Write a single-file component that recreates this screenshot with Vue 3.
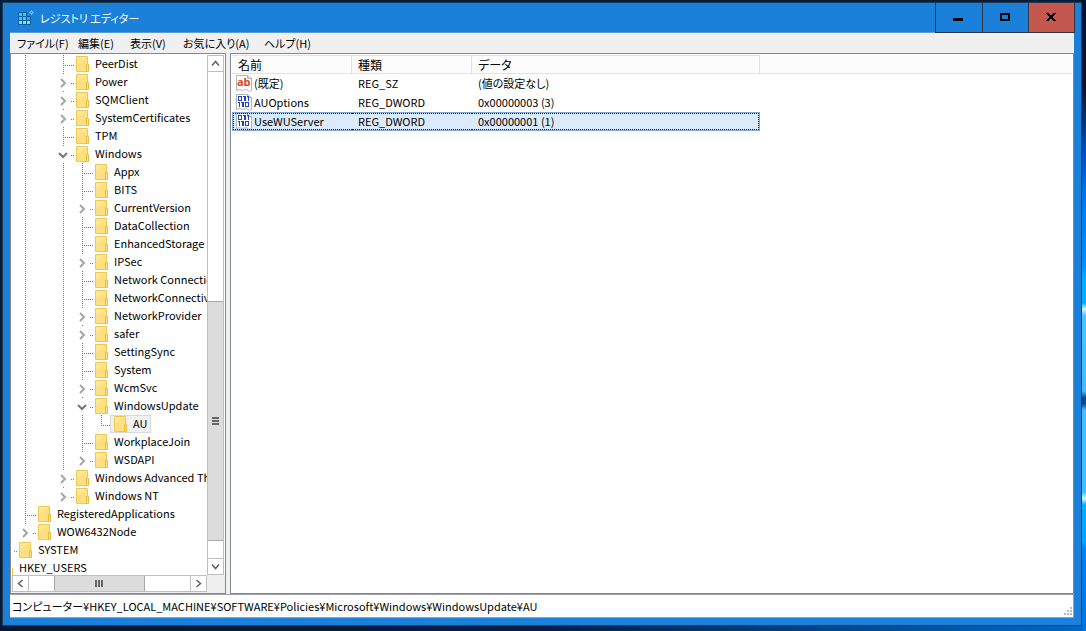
<script setup>
import { ref } from 'vue'

const menus = ['ファイル(F)', '編集(E)', '表示(V)', 'お気に入り(A)', 'ヘルプ(H)']

// guides: one character per indent cell left of the folder
//  ' ' empty, '|' line, '+' leaf branch, 'L' last branch, '>' closed, 'v' open
const nodes = ref([
  { name: 'PeerDist', guides: ' | +' },
  { name: 'Power', guides: ' | >' },
  { name: 'SQMClient', guides: ' | >' },
  { name: 'SystemCertificates', guides: ' | >' },
  { name: 'TPM', guides: ' | +' },
  { name: 'Windows', guides: ' | v' },
  { name: 'Appx', guides: ' | |+' },
  { name: 'BITS', guides: ' | |+' },
  { name: 'CurrentVersion', guides: ' | |>' },
  { name: 'DataCollection', guides: ' | |+' },
  { name: 'EnhancedStorage', guides: ' | |+' },
  { name: 'IPSec', guides: ' | |>' },
  { name: 'Network Connections', guides: ' | |+' },
  { name: 'NetworkConnectivityStatusIndicator', guides: ' | |+' },
  { name: 'NetworkProvider', guides: ' | |>' },
  { name: 'safer', guides: ' | |>' },
  { name: 'SettingSync', guides: ' | |+' },
  { name: 'System', guides: ' | |+' },
  { name: 'WcmSvc', guides: ' | |>' },
  { name: 'WindowsUpdate', guides: ' | |v' },
  { name: 'AU', guides: ' | ||L' },
  { name: 'WorkplaceJoin', guides: ' | |+' },
  { name: 'WSDAPI', guides: ' | |>' },
  { name: 'Windows Advanced Threat Protection', guides: ' | >' },
  { name: 'Windows NT', guides: ' | >' },
  { name: 'RegisteredApplications', guides: ' +' },
  { name: 'WOW6432Node', guides: ' >' },
  { name: 'SYSTEM', guides: '>' },
  { name: 'HKEY_USERS', guides: '' }
])
const selectedNode = ref('AU')

const values = ref([
  { name: '(既定)', type: 'REG_SZ', data: '(値の設定なし)' },
  { name: 'AUOptions', type: 'REG_DWORD', data: '0x00000003 (3)' },
  { name: 'UseWUServer', type: 'REG_DWORD', data: '0x00000001 (1)' }
])
const selectedValue = ref('UseWUServer')
</script>

<template>
  <div class="desktop">
    <main class="window">
      <header class="titlebar">
        <svg class="app-icon" width="16" height="16" viewBox="0 0 16 16" shape-rendering="crispEdges">
          <path fill="#0d5fa5" d="M0 2h13v13H0z" />
          <path fill="#35c8f0" d="M1 3h3v3H1zM5 3h3v3H5zM1 7h3v3H1zM5 7h3v3H5z" />
          <path fill="#7fe4fb" d="M1 11h3v3H1zM5 11h3v3H5zM9 11h3v3H9z" />
          <path fill="#22a9dc" d="M9 7h3v3H9z" />
          <path fill="#1a80d9" d="M9 0h7v6H9z" />
          <path fill="#4fc8ee" d="M13 0h1v1h1v1h1v1h-1v1h-1v1h-1V4h-1V3h-1V2h1V1h1z" />
          <path fill="#1a80d9" d="M13 2h1v1h-1z" />
        </svg>
        <h1>レジストリ エディター</h1>
        <div class="controls">
          <button type="button" aria-label="最小化">
            <svg width="12" height="12"><path d="M1 7h10v3H1z" /></svg>
          </button>
          <button type="button" aria-label="最大化">
            <svg width="12" height="12"><path fill-rule="evenodd" d="M1 2h10v8H1zM3 4v4h6V4z" /></svg>
          </button>
          <button type="button" class="close" aria-label="閉じる">
            <svg width="12" height="12" shape-rendering="crispEdges"><path d="M1 2h3v1h1v1h2V3h1V2h3v1h-1v1H9v1H8v2h1v1h1v1h1v1H8V9H7V8H5v1H4v1H1V9h1V8h1V7h1V5H3V4H2V3H1z" /></svg>
          </button>
        </div>
      </header>

      <nav class="menubar">
        <button v-for="m in menus" :key="m" type="button">{{ m }}</button>
      </nav>

      <div class="panes">
        <section class="tree-pane">
          <div class="tree-view">
            <ul class="tree">
              <li v-for="n in nodes" :key="n.name" @click="selectedNode = n.name">
                <svg v-for="(g, i) in n.guides.split('')" :key="i" class="cell" width="19" height="18" viewBox="0 0 19 18">
                  <g class="dots">
                    <path v-if="g == '|' || g == '+'" d="M6.500 0v18" />
                    <path v-if="g == 'L'" d="M6.500 0v11" />
                    <path v-if="g == '+' || g == 'L'" d="M8 10.500h10" />
                    <path v-if="g == '>' || g == 'v'" d="M14 10.500h4M6.500 0v2" />
                  </g>
                  <path v-if="g == '>'" class="arrow" d="M4 6l4 4-4 4" />
                  <path v-if="g == 'v'" class="arrow open" d="M2 8l4 4 4-4" />
                </svg>
                <span class="node" :class="{ selected: n.name == selectedNode }">
                  <svg class="folder" width="14" height="18" viewBox="0 0 14 18">
                    <path fill="#ffe794" stroke="#efc850" d="M.5 1.500h11v15H.5z" />
                    <path fill="#ffdf80" d="M1 9l10-7v14H1z" />
                    <path fill="#ffe590" stroke="#e9bd3c" d="M10.500 9.500h2v7h-2z" />
                  </svg>
                  <span class="label">{{ n.name }}</span>
                </span>
              </li>
            </ul>
          </div>
          <div class="vscroll">
            <button type="button" aria-label="上へ"><svg width="9" height="9"><path d="M1 6.500l3.500-4 3.500 4" /></svg></button>
            <div class="track above"></div>
            <div class="thumb"><i></i><i></i><i></i></div>
            <div class="track below"></div>
            <button type="button" aria-label="下へ"><svg width="9" height="9"><path d="M1 2.500l3.500 4 3.500-4" /></svg></button>
          </div>
          <div class="hscroll">
            <button type="button" aria-label="左へ"><svg width="9" height="9"><path d="M6.500 1l-4 3.500 4 3.500" /></svg></button>
            <div class="track left"></div>
            <div class="thumb"><i></i><i></i><i></i></div>
            <div class="track right"></div>
            <button type="button" aria-label="右へ"><svg width="9" height="9"><path d="M2.500 1l4 3.500-4 3.500" /></svg></button>
          </div>
        </section>

        <section class="list-pane">
          <table>
            <thead>
              <tr>
                <th class="name">名前</th>
                <th class="type">種類</th>
                <th class="data">データ</th>
                <th class="rest"></th>
              </tr>
            </thead>
            <tbody>
              <tr v-for="v in values" :key="v.name" :class="{ selected: v.name == selectedValue }" @click="selectedValue = v.name">
                <td>
                  <div class="value-name">
                    <svg width="16" height="17" viewBox="0 0 16 17">
                      <path fill="#fff" stroke="#b4b4b4" d="M.5.5h11l4 3v12l-2 1-3-2-4 1-3-1-3 1z" />
                      <path fill="#ddd" stroke="#b4b4b4" d="M11.500.5v3h4" />
                      <text v-if="v.type == 'REG_SZ'" class="ab" x="1" y="11">ab</text>
                      <g v-else class="bits">
                        <path d="M2 2h4v5H2zM3 3v3h2V3zM7 2h3v5H8V3H7zM11 2h2v5h-1V3h-1z" />
                        <path d="M2 8h2v5H3V9H2zM5 8h3v5H6V9H5zM9 8h4v5H9zM10 9v3h2V9z" />
                      </g>
                    </svg>
                    <span>{{ v.name }}</span>
                  </div>
                </td>
                <td>{{ v.type }}</td>
                <td>{{ v.data }}</td>
              </tr>
            </tbody>
          </table>
        </section>
      </div>

      <footer class="statusbar">
        <span>コンピューター¥HKEY_LOCAL_MACHINE¥SOFTWARE¥Policies¥Microsoft¥Windows¥WindowsUpdate¥AU</span>
        <svg class="grip" width="9" height="9"><path d="M7 0h2v2H7zM4 3h2v2H4zM7 3h2v2H7zM1 6h2v2H1zM4 6h2v2H4zM7 6h2v2H7z" /></svg>
      </footer>
    </main>
  </div>
</template>

<style>
body {
  margin: 0;
  overflow: hidden;
}
</style>

<style scoped>
* {
  box-sizing: border-box;
}

.desktop {
  display: flex;
  height: 100vh;
  padding: 2px 4px 5px 2px;
  font-family: "Noto Sans CJK JP", sans-serif;
  font-feature-settings: "palt";
  font-size: 11px;
  line-height: 18px;
  color: #000;
  background:
    linear-gradient(#001230, #001838 14%, #0050b4 24%, #0078ee 32%, #0090f4 42%, #00b0fc 44%, #00b0fc 48%, #d8f4ff 49%, #50c0ff 50%, #48b8fc 62%, #0a4a90 63%, #0a4a90 64%, #48bcfc 65%, #48bcfc 78%, #d8f4ff 79%, #00b0fc 80%, #00a4f8 86%, #0080ee 87%, #0074dc) right / 4px 100% no-repeat,
    linear-gradient(90deg, #001a38, #002048 50%, #0068c4) bottom / 100% 5px no-repeat,
    #001c3e;
}

button {
  font: inherit;
  font-feature-settings: inherit;
  color: inherit;
  padding: 0;
  border: 0;
  background: none;
}

.window {
  flex: 1;
  min-width: 0;
  display: flex;
  flex-direction: column;
  padding: 0 7px 7px;
  border: 1px solid #26384a;
  background: #1a80d9;
}

.titlebar {
  display: flex;
  height: 30px;
  flex: none;
  margin-right: -1px;
  padding-left: 8px;
  border-bottom: 1px solid #5a9bd0;
}

.app-icon {
  margin-top: 7px;
}

h1 {
  margin: 0;
  padding: 6px 0 0 6px;
  flex: 1;
  font-size: 11px;
  font-weight: normal;
  color: #fff;
}

.controls {
  display: flex;
  height: 30px;
  border: 1px solid #2c3844;
  border-width: 0 1px 1px 0;
}

.controls button {
  width: 46px;
  padding: 0 2px 2px 0;
  border-left: 1px solid #2c3844;
  display: flex;
  align-items: center;
  justify-content: center;
}

.controls button:first-child {
  width: 47px;
}

.controls .close {
  background: #c4584f;
}

.menubar {
  display: grid;
  grid-template-columns: 61px 52px 53px 81px auto;
  justify-content: start;
  flex: none;
  height: 20px;
  padding: 0 7px;
  background: #f0f0f0;
}

.menubar button {
  text-align: left;
  white-space: nowrap;
}

.panes {
  flex: 1;
  min-height: 0;
  display: flex;
  gap: 4px;
  background: #f0f0f0;
}

.tree-pane {
  flex: none;
  width: 216px;
  display: grid;
  grid-template: minmax(0, 1fr) 17px / minmax(0, 1fr) 17px;
  padding: 1px;
  border: 1px solid #828790;
  background: linear-gradient(#fff, #fff) top / 100% calc(100% - 18px) no-repeat, #f0f0f0;
}

.tree-view {
  overflow: hidden;
}

/* scrolled sideways by 12px */
.tree {
  margin: 0 0 0 -12px;
  padding: 0;
  list-style: none;
}

.tree li {
  display: flex;
  height: 18px;
  white-space: nowrap;
}

.cell {
  flex: none;
}

.dots path {
  stroke: #777;
  stroke-dasharray: 1 1;
}

.arrow {
  fill: none;
  stroke: #a6a6a6;
  stroke-width: 2;
}

.arrow.open {
  stroke: #777;
}

.node {
  display: flex;
  gap: 5px;
}

.node.selected {
  margin-left: -4px;
  padding: 0 4px;
  background: #f0f0f0;
  box-shadow: inset 0 0 0 1px #d9d9d9;
}

.label {
  line-height: 17px;
}

.folder {
  flex: none;
}

.vscroll {
  display: flex;
  flex-direction: column;
  border: 1px solid #bfbfbf;
  border-width: 0 1px;
  background: #fff;
}

.hscroll {
  display: flex;
  border: 1px solid #bfbfbf;
  border-width: 1px 0;
  background: #fff;
}

.vscroll button,
.hscroll button {
  flex: none;
  display: flex;
  align-items: center;
  justify-content: center;
}

.vscroll button {
  height: 17px;
  border: 1px solid #bfbfbf;
  border-width: 1px 0;
}

.hscroll button {
  width: 17px;
  border: 1px solid #bfbfbf;
  border-width: 0 1px;
}

.vscroll button path,
.hscroll button path {
  fill: none;
  stroke: #606060;
  stroke-width: 1.500;
}

.thumb {
  display: flex;
  align-items: center;
  justify-content: center;
  gap: 1px;
  background: #dcdcdc;
}

.thumb i {
  background: #666;
}

.vscroll .thumb {
  flex: 239;
  flex-direction: column;
  border: 1px solid #a8a8a8;
  border-width: 1px 0;
}

.vscroll .thumb i {
  width: 7px;
  height: 2px;
}

.hscroll .thumb {
  flex: 90;
  border: 1px solid #a8a8a8;
  border-width: 0 1px;
}

.hscroll .thumb i {
  width: 2px;
  height: 7px;
}

.above {
  flex: 230;
}

.below {
  flex: 17;
}

.left {
  flex: 25;
}

.right {
  flex: 46;
}

.list-pane {
  flex: 1;
  min-width: 0;
  padding: 1px;
  border: 1px solid #828790;
  background: #fff;
  overflow: hidden;
}

table {
  width: 100%;
  table-layout: fixed;
  border-collapse: separate;
  border-spacing: 0;
}

th {
  height: 19px;
  padding: 0 0 0 6px;
  font-size: 12px;
  line-height: 17px;
  text-align: left;
  font-weight: normal;
  background: #fcfcfc;
  border: 1px solid #e2e2e2;
  border-width: 1px 1px 1px 0;
}

.name,
.type {
  width: 120px;
}

.data {
  width: 288px;
}

.rest {
  border-width: 0 0 1px;
}

td {
  position: relative;
  height: 19px;
  padding: 0 0 0 6px;
  line-height: 17px;
  border: 1px solid transparent;
  border-width: 1px 0;
  white-space: nowrap;
}

td:first-child {
  padding-left: 3px;
  border-left-width: 1px;
}

td:last-child {
  border-right-width: 1px;
}

.selected td {
  background: #dceafd;
  border-color: #7da9da;
}

/* keyboard focus rectangle */
.selected td::after {
  content: "";
  position: absolute;
  inset: 0;
  border: 1px dotted #111;
  border-width: 1px 0;
}

.selected td:first-child::after {
  border-left-width: 1px;
}

.selected td:last-child::after {
  border-right-width: 1px;
}

.value-name {
  display: flex;
  gap: 2px;
}

.ab {
  font-family: "Noto Sans", sans-serif;
  font-size: 11px;
  font-weight: bold;
  fill: #d9482b;
}

.bits {
  fill: #2040d0;
  fill-rule: evenodd;
}

.statusbar {
  flex: none;
  display: flex;
  justify-content: space-between;
  align-items: flex-end;
  height: 24px;
  padding: 0 1px 1px 2px;
  border: 1px solid #a0a0a8;
  border-width: 1px 1px 1px 0;
  background: #fff;
}

.statusbar span {
  line-height: 20px;
}

.grip {
  fill: #bcbcbc;
}
</style>
